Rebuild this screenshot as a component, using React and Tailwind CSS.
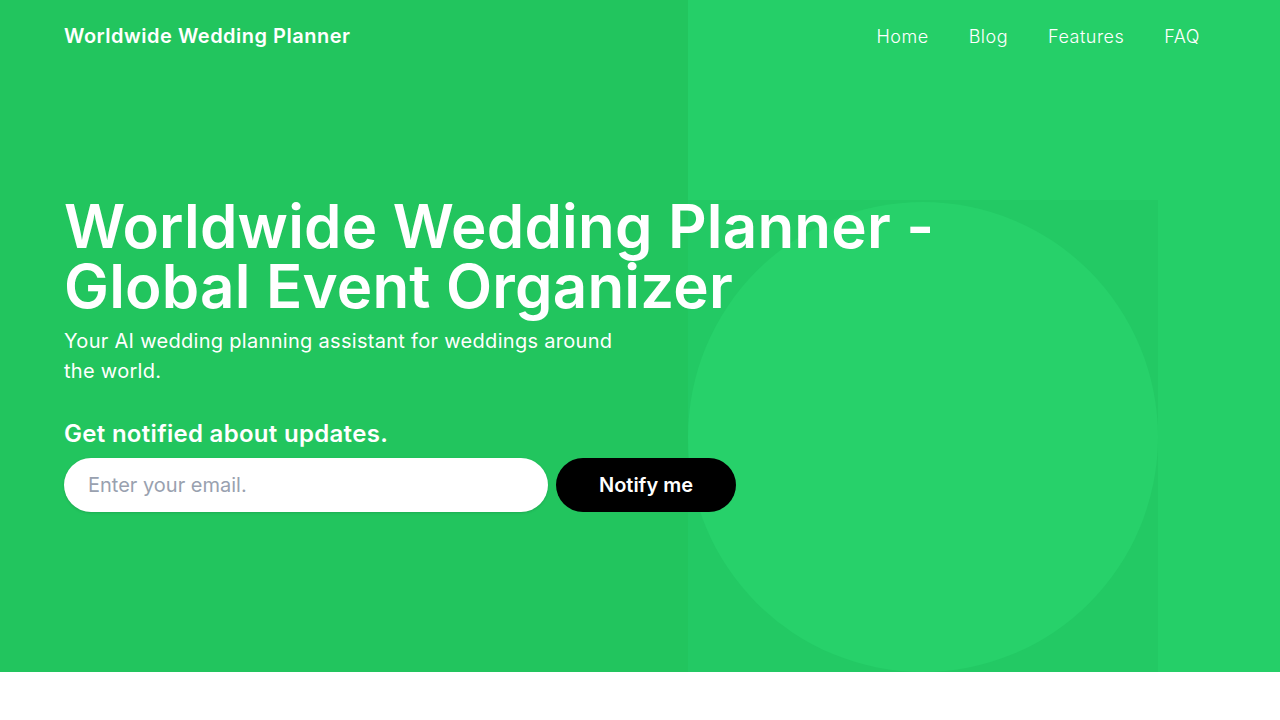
import React from 'react';

const font = { fontFamily: 'Inter, "Noto Sans", sans-serif' };

function Nav() {
  return (
    <nav className="relative z-10 flex items-center justify-between pl-16 pr-20 h-[72px]">
      <a href="#" className="text-[20px] font-semibold tracking-[0.5px] text-white">Worldwide Wedding Planner</a>
      <ul className="flex items-center gap-10 text-[18px] font-light tracking-[0.5px] text-white">
        <li><a href="#">Home</a></li>
        <li><a href="#">Blog</a></li>
        <li><a href="#">Features</a></li>
        <li><a href="#">FAQ</a></li>
      </ul>
    </nav>
  );
}

export default function App() {
  return (
    <div className="min-h-screen bg-white" style={font}>
      <section className="relative h-[672px] overflow-hidden bg-[#22c55e]">
        {/* decorative shapes */}
        <div className="absolute top-0 right-0 h-full w-[592px] bg-[#25cf68]" />
        <div className="absolute left-[688px] top-[200px] h-[472px] w-[470px] bg-[#23c964]" />
        <div className="absolute left-[688px] top-[202px] h-[470px] w-[470px] rounded-full bg-[#27d16a]" />

        <Nav />

        <div className="relative z-10 px-16 pt-[124px]">
          <h1 className="text-[60px] font-semibold leading-[60px] tracking-[0.2px] text-white max-w-[900px]">
            Worldwide Wedding Planner - Global Event Organizer
          </h1>
          <p className="mt-[10px] max-w-[570px] text-[20px] leading-[30px] tracking-[0.3px] text-white">
            Your AI wedding planning assistant for weddings around the world.
          </p>
          <h2 className="mt-[30px] text-[24px] font-semibold tracking-[0.3px] text-white">Get notified about updates.</h2>
          <form className="mt-[6px] flex gap-2" onSubmit={(e) => e.preventDefault()}>
            <input
              type="email"
              placeholder="Enter your email."
              className="h-[54px] w-[484px] rounded-full bg-white px-6 text-[20px] text-gray-700 placeholder:text-gray-400 outline-none shadow-sm"
            />
            <button className="h-[54px] w-[180px] rounded-full bg-black text-[20px] font-semibold text-white">
              Notify me
            </button>
          </form>
        </div>
      </section>
    </div>
  );
}
